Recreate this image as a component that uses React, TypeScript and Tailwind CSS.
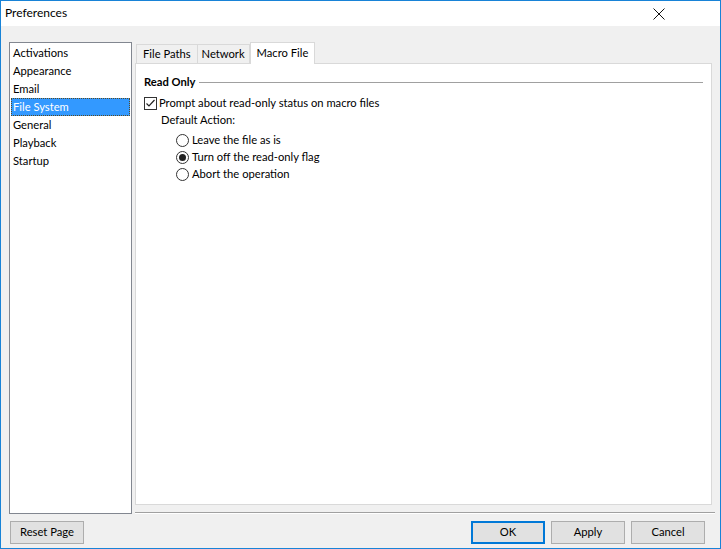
import { useState } from 'react';

const font = { fontFamily: 'Lato, "Liberation Sans", sans-serif' };

export default function App() {
  const [selected, setSelected] = useState('File System');
  const [action, setAction] = useState('off');
  const [prompt, setPrompt] = useState(true);

  const pages = ['Activations', 'Appearance', 'Email', 'File System', 'General', 'Playback', 'Startup'];

  return (
    <div className="w-[721px] h-[549px] border border-[#1883d7] flex flex-col text-[11.2px] text-black bg-[#f0f0f0]" style={font}>
      {/* Title bar */}
      <div className="h-[25px] bg-white flex items-center justify-between shrink-0">
        <span className="pl-[4px] leading-none text-[12px] -mt-[1px]">Preferences</span>
        <svg width="12" height="12" viewBox="0 0 12 12" className="mr-[55px]">
          <path d="M0.5 0.5 L11.5 11.5 M11.5 0.5 L0.5 11.5" stroke="#111" strokeWidth="1" />
        </svg>
      </div>

      <div className="flex-1 flex flex-col pl-[8px] pr-[5px] pt-[16px]">
        <div className="flex">
          {/* Page list */}
          <div className="w-[124px] h-[472px] bg-white border border-[#828790] pt-[1px] px-[1px]">
            {pages.map((p) => (
              <div
                key={p}
                onClick={() => setSelected(p)}
                className={
                  p === selected
                    ? 'h-[18px] flex items-center pl-[1px] bg-[#3399ff] text-white border border-dotted border-[#5a4a20]'
                    : 'h-[18px] flex items-center pl-[2px]'
                }
              >
                {p}
              </div>
            ))}
          </div>

          {/* Tabs */}
          <div className="ml-[3px] w-[580px] flex flex-col">
            <div className="flex items-end h-[21px] pl-[1px]">
              <div className="h-[19px] px-[6px] flex items-center border border-b-0 border-[#d9d9d9] bg-[#f0f0f0]">File Paths</div>
              <div className="h-[19px] px-[4px] flex items-center border border-l-0 border-b-0 border-[#d9d9d9] bg-[#f0f0f0]">Network</div>
              <div className="h-[22px] px-[6px] flex items-start pt-[2px] border border-b-0 border-[#d9d9d9] bg-white -mb-[1px] relative z-10">Macro File</div>
            </div>
            <div className="w-[577px] h-[442px] bg-white border border-[#d9d9d9] px-[8px] pt-[10px]">
              <div className="flex items-center">
                <span className="font-bold">Read Only</span>
                <div className="flex-1 h-px bg-[#a0a0a0] ml-[4px]" />
              </div>
              <label className="flex items-center mt-[4px] h-[17px]" onClick={() => setPrompt(!prompt)}>
                <span className="w-[13px] h-[13px] border border-[#333] bg-white flex items-center justify-center">
                  {prompt && (
                    <svg width="11" height="11" viewBox="0 0 11 11">
                      <path d="M1.5 5.5 L4 8 L9.5 2" fill="none" stroke="#222" strokeWidth="1.2" />
                    </svg>
                  )}
                </span>
                <span className="ml-[2px]">Prompt about read-only status on macro files</span>
              </label>
              <div className="ml-[17px] h-[17px] flex items-center">Default Action:</div>
              <div className="ml-[32px] mt-[3px] flex flex-col">
                {[
                  ['keep', 'Leave the file as is'],
                  ['off', 'Turn off the read-only flag'],
                  ['abort', 'Abort the operation'],
                ].map(([k, label]) => (
                  <div key={k} className="h-[17px] flex items-center" onClick={() => setAction(k)}>
                    <span className="w-[13px] h-[13px] rounded-full border border-[#333] bg-white flex items-center justify-center">
                      {action === k && <span className="w-[7px] h-[7px] rounded-full bg-[#222]" />}
                    </span>
                    <span className="ml-[3px]">{label}</span>
                  </div>
                ))}
              </div>
            </div>
            <div className="mt-[7px] h-[2px] border-t border-[#a0a0a0] border-b border-b-white w-[580px]" />
          </div>
        </div>

        {/* Buttons */}
        <div className="flex items-center mt-[7px]">
          <button className="w-[74px] h-[23px] ml-[1px] bg-[#e1e1e1] border border-[#adadad]">Reset Page</button>
          <div className="flex-1" />
          <button className="w-[74px] h-[23px] bg-[#e1e1e1] border-2 border-[#0078d7]">OK</button>
          <button className="w-[74px] h-[23px] ml-[6px] bg-[#e1e1e1] border border-[#adadad]">Apply</button>
          <button className="w-[74px] h-[23px] ml-[6px] mr-[10px] bg-[#e1e1e1] border border-[#adadad]">Cancel</button>
        </div>
      </div>
    </div>
  );
}
